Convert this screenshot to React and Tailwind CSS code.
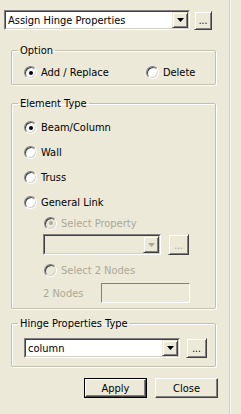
import React from 'react';

const font = { fontFamily: '"DejaVu Sans Condensed", Tahoma, "Liberation Sans", sans-serif' };

const Radio = ({ checked, disabled }) => (
  <span
    className={`relative w-[13px] h-[13px] shrink-0 rounded-full border border-t-[#808080] border-l-[#808080] border-r-white border-b-white shadow-[inset_1px_1px_0_#404040,inset_-1px_-1px_0_#d4d0c8] ${
      disabled ? 'bg-[#ece9d8]' : 'bg-white'
    }`}
  >
    {checked && (
      <span
        className={`absolute left-[3.5px] top-[3.5px] w-[4px] h-[4px] rounded-full ${
          disabled ? 'bg-[#aca899]' : 'bg-black'
        }`}
      />
    )}
  </span>
);

const RadioRow = ({ label, checked, disabled, className = '' }) => (
  <label className={`flex items-center gap-[4px] ${className}`}>
    <Radio checked={checked} disabled={disabled} />
    <span className={disabled ? 'text-[#aca899]' : 'text-black'}>{label}</span>
  </label>
);

const Arrow = ({ disabled }) => (
  <span className="flex items-center justify-center w-[16px] h-full bg-[#ece9d8] border border-t-[#ece9d8] border-l-[#ece9d8] border-r-[#404040] border-b-[#404040] shadow-[inset_1px_1px_0_#fff,inset_-1px_-1px_0_#808080]">
    <svg width="7" height="4" viewBox="0 0 7 4">
      <path d="M0 0h7L3.5 4z" fill={disabled ? '#aca899' : '#000'} />
    </svg>
  </span>
);

const Combo = ({ value, disabled, className = '' }) => (
  <div
    className={`flex items-stretch border border-t-[#808080] border-l-[#808080] border-r-white border-b-white ${className}`}
  >
    <div
      className={`flex flex-1 items-stretch border border-t-[#404040] border-l-[#404040] border-r-[#d4d0c8] border-b-[#d4d0c8] ${
        disabled ? 'bg-[#ece9d8]' : 'bg-white'
      }`}
    >
      <span className="flex-1 pl-[2px] flex items-center">{value}</span>
      <Arrow disabled={disabled} />
    </div>
  </div>
);

const Dots = ({ disabled, className = '' }) => (
  <button
    className={`flex items-end justify-center pb-[3px] bg-[#ece9d8] border border-t-[#ece9d8] border-l-[#ece9d8] border-r-[#404040] border-b-[#404040] shadow-[inset_1px_1px_0_#fff,inset_-1px_-1px_0_#808080] leading-none text-[10px] ${
      disabled ? 'text-[#aca899]' : 'text-black'
    } ${className}`}
  >
    ...
  </button>
);

const Group = ({ title, className = '', children }) => (
  <fieldset
    className={`ml-[11px] w-[205px] border border-[#c2bfad] rounded-[2px] shadow-[1px_1px_0_#fff,inset_1px_1px_0_#fff] ${className}`}
  >
    <legend className="ml-[6px] px-[2px] leading-[13px]">{title}</legend>
    {children}
  </fieldset>
);

const PushButton = ({ label, isDefault }) => (
  <button
    className={`w-[63px] h-[20px] flex items-center justify-center ${
      isDefault ? 'border border-black' : ''
    }`}
  >
    <span className="w-full h-full flex items-center justify-center bg-[#ece9d8] border border-t-white border-l-white border-r-[#404040] border-b-[#404040] shadow-[inset_-1px_-1px_0_#808080]">
      {label}
    </span>
  </button>
);

export default function App() {
  return (
    <div
      className="w-[241px] h-[414px] bg-[#ece9d8] text-[11px] leading-[13px] text-black overflow-hidden"
      style={font}
    >
      <div className="w-[230px] h-full border-r border-r-[#d3d0bd] shadow-[1px_0_0_#f7f6ee]">
        <div className="flex items-center pt-[10px] pl-[4px] gap-[4px]">
          <Combo value="Assign Hinge Properties" className="w-[186px] h-[20px]" />
          <Dots className="w-[18px] h-[19px]" />
        </div>

        <Group title="Option" className="mt-[14px] pt-[9px] pb-[5px]">
          <div className="flex items-center h-[13px]">
            <RadioRow label="Add / Replace" checked className="ml-[12px]" />
            <RadioRow label="Delete" className="ml-[37px]" />
          </div>
        </Group>

        <Group title="Element Type" className="mt-[12px] pt-[5px] pb-[5px]">
          <div className="flex flex-col pl-[12px]">
            <RadioRow label="Beam/Column" checked className="h-[25px]" />
            <RadioRow label="Wall" className="h-[25px]" />
            <RadioRow label="Truss" className="h-[25px]" />
            <RadioRow label="General Link" className="h-[25px]" />
          </div>
          <div className="flex flex-col pl-[32px]">
            <RadioRow label="Select Property" checked disabled className="h-[16px]" />
            <div className="flex items-center gap-[7px] mt-[3px] -ml-[1px]">
              <Combo disabled className="w-[118px] h-[21px]" />
              <Dots disabled className="w-[21px] h-[21px]" />
            </div>
            <RadioRow label="Select 2 Nodes" disabled className="h-[16px] mt-[7px]" />
            <div className="flex items-center mt-[5px] h-[20px] -ml-[1px]">
              <span className="w-[58px] text-[#aca899]">2 Nodes</span>
              <span className="w-[89px] h-[20px] border border-t-[#808080] border-l-[#808080] border-r-white border-b-white bg-[#ece9d8]" />
            </div>
          </div>
        </Group>

        <Group title="Hinge Properties Type" className="mt-[8px] pt-[8px] pb-[8px]">
          <div className="flex items-center gap-[6px] pl-[12px]">
            <Combo value="column" className="w-[156px] h-[20px]" />
            <Dots className="w-[21px] h-[20px]" />
          </div>
        </Group>

        <div className="flex gap-[8px] mt-[11px] pl-[84px]">
          <PushButton label="Apply" isDefault />
          <PushButton label="Close" />
        </div>
      </div>
    </div>
  );
}
